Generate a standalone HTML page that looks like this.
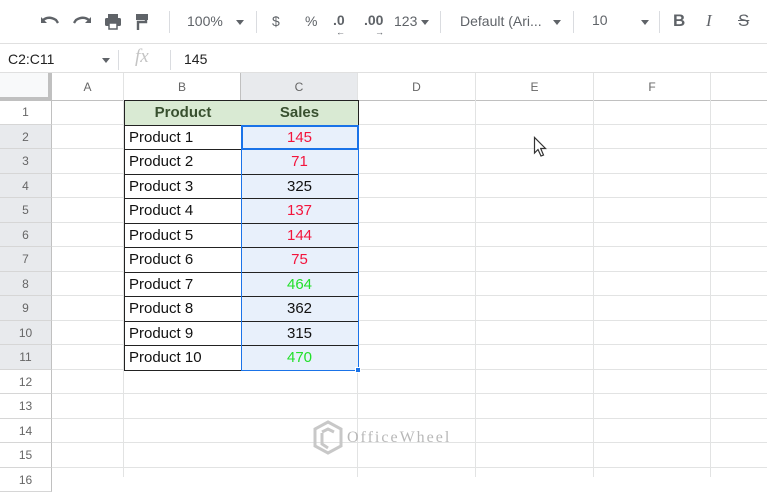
<!DOCTYPE html>
<html><head><style>
*{margin:0;padding:0;box-sizing:border-box}
body{width:767px;height:477px;overflow:hidden;background:#fff;font-family:"Liberation Sans",Arial,sans-serif;position:relative}
.a{position:absolute}
.tb{color:#5f6368;font-size:14px}
.sep{position:absolute;top:11px;width:1px;height:22px;background:#dadce0}
.rh{position:absolute;left:0;width:52px;height:24.5px;border-bottom:1px solid #d6d6d6;border-right:1px solid #c0c0c0;text-align:center;font-size:12px;color:#666;line-height:24px}
.sel{background:#e8eaed}
.hl{position:absolute;left:52px;right:0;height:1px;background:#e2e3e3}
.vl{position:absolute;top:73px;bottom:0;width:1px;background:#e2e3e3}
.ch{position:absolute;top:73px;height:28px;border-right:1px solid #c0c0c0;border-bottom:1px solid #c0c0c0;text-align:center;font-size:12px;color:#666;line-height:28px}
.cb{position:absolute;left:124px;width:118px;height:25.5px;border:1px solid #222;background:#fff;font-size:15px;line-height:23px;padding-left:4px;color:#111}
.cc{position:absolute;left:241px;width:118px;height:25.5px;border:1px solid #222;border-left:none;background:#e8f0fb;font-size:15px;line-height:23px;text-align:center;color:#111}
.r{color:#f3143c}.g{color:#22e02a}
</style></head><body>
<div class="a" style="left:0;top:0;width:767px;height:44px;border-bottom:1px solid #e0e0e0"></div>
<svg class="a" style="left:38px;top:12px" width="110" height="20" viewBox="0 0 110 20">
<path d="M4 9 Q10 3 18 8 L20 11" fill="none" stroke="#5f6368" stroke-width="2.4"/><path d="M3 5 L3 11 L9 11Z" fill="#5f6368"/>
<path d="M52 9 Q46 3 38 8 L36 11" fill="none" stroke="#5f6368" stroke-width="2.4"/><path d="M53 5 L53 11 L47 11Z" fill="#5f6368"/>
<rect x="70" y="2" width="10" height="4" fill="#5f6368"/><rect x="67" y="6" width="16" height="8" rx="1.5" fill="#5f6368"/><rect x="71" y="11" width="8" height="6" fill="#fff" stroke="#5f6368" stroke-width="1.5"/>
<rect x="104" y="2" width="12" height="6" fill="#5f6368" transform="translate(-6 0)"/><path d="M110 5 L112 5 L112 10 L104 10 L104 18" fill="none" stroke="#5f6368" stroke-width="2.4" transform="translate(-4 0)"/>
</svg>
<div class="sep" style="left:169px"></div>
<div class="a tb" style="left:187px;top:13px">100%</div>
<div class="a" style="left:236px;top:20px;border:4px solid transparent;border-top:5px solid #5f6368"></div>
<div class="sep" style="left:256px"></div>
<div class="a tb" style="left:272px;top:13px">$</div>
<div class="a tb" style="left:305px;top:13px">%</div>
<div class="a tb" style="left:333px;top:12px;font-weight:bold">.0</div>
<div class="a tb" style="left:336px;top:27px;font-size:9px">←</div>
<div class="a tb" style="left:364px;top:12px;font-weight:bold">.00</div>
<div class="a tb" style="left:375px;top:27px;font-size:9px">→</div>
<div class="a tb" style="left:394px;top:13px">123</div>
<div class="a" style="left:421px;top:20px;border:4px solid transparent;border-top:5px solid #5f6368"></div>
<div class="sep" style="left:440px"></div>
<div class="a tb" style="left:460px;top:13px">Default (Ari...</div>
<div class="a" style="left:553px;top:20px;border:4px solid transparent;border-top:5px solid #5f6368"></div>
<div class="sep" style="left:573px"></div>
<div class="a tb" style="left:592px;top:12px">10</div>
<div class="a" style="left:641px;top:20px;border:4px solid transparent;border-top:5px solid #5f6368"></div>
<div class="sep" style="left:659px"></div>
<div class="a" style="left:673px;top:11px;font-size:17px;font-weight:bold;color:#5f6368">B</div>
<div class="a" style="left:706px;top:11px;font-size:17px;font-style:italic;color:#5f6368;font-family:'Liberation Serif',serif">I</div>
<div class="a" style="left:738px;top:11px;font-size:17px;color:#5f6368;text-decoration:line-through">S</div>
<div class="a" style="left:0;top:45px;width:767px;height:28px;border-bottom:1px solid #e0e0e0"></div>
<div class="a" style="left:8px;top:51px;font-size:14px;color:#222">C2:C11</div>
<div class="a" style="left:102px;top:58px;border:4px solid transparent;border-top:5px solid #5f6368"></div>
<div class="a" style="left:118px;top:50px;width:1px;height:20px;background:#dadce0"></div>
<div class="a" style="left:135px;top:46px;font-size:19px;font-style:italic;color:#c4c4c4;font-family:'Liberation Serif',serif">fx</div>
<div class="a" style="left:170px;top:50px;width:1px;height:20px;background:#dadce0"></div>
<div class="a" style="left:184px;top:51px;font-size:14px;color:#222">145</div>
<div class="ch" style="left:0;width:52px;background:#f8f9fa;border-right:4px solid #c0c0c0;border-bottom:4px solid #c0c0c0"></div>
<div class="ch" style="left:52px;width:72px">A</div>
<div class="ch" style="left:124px;width:117px">B</div>
<div class="ch sel" style="left:241px;width:117px">C</div>
<div class="ch" style="left:358px;width:118px">D</div>
<div class="ch" style="left:476px;width:118px">E</div>
<div class="ch" style="left:594px;width:117px">F</div>
<div class="ch" style="left:711px;width:60px"></div>
<div class="vl" style="left:123px"></div><div class="vl" style="left:357px"></div><div class="vl" style="left:475px"></div><div class="vl" style="left:593px"></div><div class="vl" style="left:710px"></div>
<div class="hl" style="top:124px"></div><div class="hl" style="top:148px"></div><div class="hl" style="top:173px"></div><div class="hl" style="top:197px"></div><div class="hl" style="top:222px"></div><div class="hl" style="top:246px"></div><div class="hl" style="top:271px"></div><div class="hl" style="top:295px"></div><div class="hl" style="top:320px"></div><div class="hl" style="top:344px"></div><div class="hl" style="top:369px"></div><div class="hl" style="top:393px"></div><div class="hl" style="top:418px"></div><div class="hl" style="top:442px"></div><div class="hl" style="top:467px"></div>
<div class="rh" style="top:100px">1</div>
<div class="rh sel" style="top:124.5px">2</div>
<div class="rh sel" style="top:149px">3</div>
<div class="rh sel" style="top:173.5px">4</div>
<div class="rh sel" style="top:198px">5</div>
<div class="rh sel" style="top:222.5px">6</div>
<div class="rh sel" style="top:247px">7</div>
<div class="rh sel" style="top:271.5px">8</div>
<div class="rh sel" style="top:296px">9</div>
<div class="rh sel" style="top:320.5px">10</div>
<div class="rh sel" style="top:345px">11</div>
<div class="rh" style="top:369.5px">12</div>
<div class="rh" style="top:394px">13</div>
<div class="rh" style="top:418.5px">14</div>
<div class="rh" style="top:443px">15</div>
<div class="rh" style="top:467.5px">16</div>
<div class="cb" style="top:100px;background:#d9ead3;text-align:center;font-weight:bold;color:#38502f;padding:0">Product</div>
<div class="cc" style="top:100px;background:#d9ead3;font-weight:bold;color:#38502f">Sales</div>
<div class="cb" style="top:124.5px">Product 1</div><div class="cc r" style="top:124.5px">145</div>
<div class="cb" style="top:149px">Product 2</div><div class="cc r" style="top:149px">71</div>
<div class="cb" style="top:173.5px">Product 3</div><div class="cc" style="top:173.5px">325</div>
<div class="cb" style="top:198px">Product 4</div><div class="cc r" style="top:198px">137</div>
<div class="cb" style="top:222.5px">Product 5</div><div class="cc r" style="top:222.5px">144</div>
<div class="cb" style="top:247px">Product 6</div><div class="cc r" style="top:247px">75</div>
<div class="cb" style="top:271.5px">Product 7</div><div class="cc g" style="top:271.5px">464</div>
<div class="cb" style="top:296px">Product 8</div><div class="cc" style="top:296px">362</div>
<div class="cb" style="top:320.5px">Product 9</div><div class="cc" style="top:320.5px">315</div>
<div class="cb" style="top:345px">Product 10</div><div class="cc g" style="top:345px">470</div>
<div class="a" style="left:241px;top:124.5px;width:118px;height:246px;border:1px solid #1a73e8"></div>
<div class="a" style="left:241px;top:124.5px;width:118px;height:25px;border:2px solid #1a73e8"></div>
<div class="a" style="left:355px;top:367px;width:6px;height:6px;background:#1a73e8;border:1px solid #fff"></div>
<svg class="a" style="left:312px;top:420px" width="32" height="36" viewBox="0 0 32 36"><path d="M16 2 L29 9 L29 26 L16 33 L3 26 L3 9Z M10 13 L10 24 L16 28 M22 12 L16 9 L10 12" fill="none" stroke="#c8c8c8" stroke-width="3"/></svg>
<div class="a" style="left:347px;top:429px;font-size:16px;letter-spacing:2px;color:#b8b8b8;font-family:'Liberation Serif',serif">OfficeWheel</div>
<svg class="a" style="left:533px;top:136px" width="16" height="24" viewBox="0 0 16 24"><path d="M1.5 1.5 L1.5 17 L5 13.5 L8 20 L10.5 19 L7.7 12.5 L12.5 12.5Z" fill="#fff" stroke="#333" stroke-width="1.2"/></svg>
</body></html>
